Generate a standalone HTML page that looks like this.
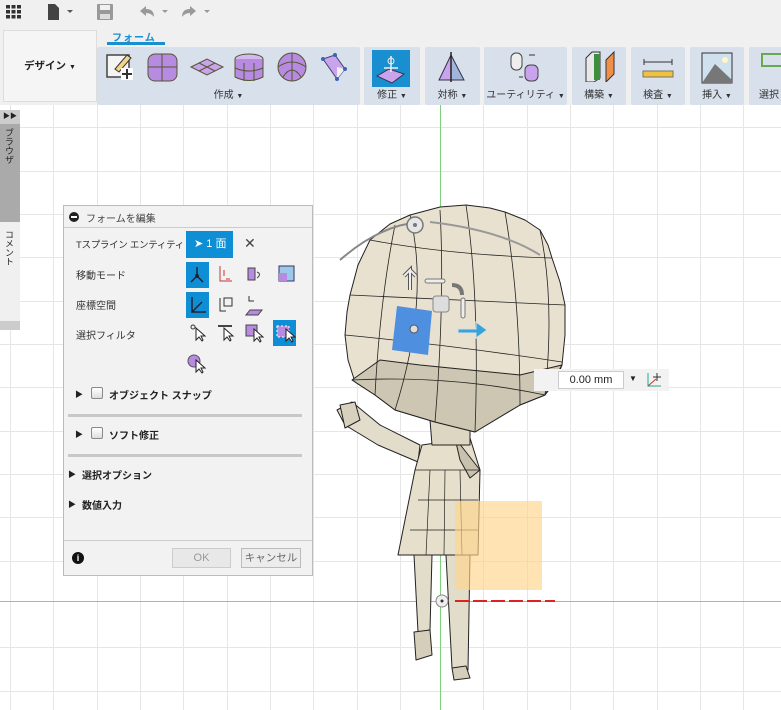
<!DOCTYPE html>
<html><head><meta charset="utf-8"><style>
*{box-sizing:border-box;margin:0;padding:0}
body{width:781px;height:710px;overflow:hidden;background:#fff;font-family:"Liberation Sans","Noto Sans CJK JP",sans-serif;font-size:11px;color:#222;position:relative}
.abs{position:absolute}
.panel{position:absolute;top:47px;height:58px;background:#d8e0ec;border-radius:2px}
.plabel{position:absolute;bottom:4px;left:0;right:0;text-align:center;font-size:10px;color:#333}
.lbl{position:absolute;left:12px;font-size:10px;color:#333;white-space:nowrap}
.bb{position:absolute;background:#0e8fd5;width:23px;height:26px}
</style></head><body>
<svg class="abs" style="left:0;top:0" width="781" height="710">
<g stroke="#e6e6e6" stroke-width="1">
<line x1="10.5" y1="105" x2="10.5" y2="710"/><line x1="53.5" y1="105" x2="53.5" y2="710"/><line x1="97.5" y1="105" x2="97.5" y2="710"/><line x1="140.5" y1="105" x2="140.5" y2="710"/><line x1="183.5" y1="105" x2="183.5" y2="710"/><line x1="227.5" y1="105" x2="227.5" y2="710"/><line x1="270.5" y1="105" x2="270.5" y2="710"/><line x1="313.5" y1="105" x2="313.5" y2="710"/><line x1="357.5" y1="105" x2="357.5" y2="710"/><line x1="400.5" y1="105" x2="400.5" y2="710"/><line x1="483.5" y1="105" x2="483.5" y2="710"/><line x1="527.5" y1="105" x2="527.5" y2="710"/><line x1="570.5" y1="105" x2="570.5" y2="710"/><line x1="613.5" y1="105" x2="613.5" y2="710"/><line x1="657.5" y1="105" x2="657.5" y2="710"/><line x1="700.5" y1="105" x2="700.5" y2="710"/><line x1="743.5" y1="105" x2="743.5" y2="710"/>
<line x1="0" y1="127.5" x2="781" y2="127.5"/><line x1="0" y1="171.5" x2="781" y2="171.5"/><line x1="0" y1="214.5" x2="781" y2="214.5"/><line x1="0" y1="257.5" x2="781" y2="257.5"/><line x1="0" y1="301.5" x2="781" y2="301.5"/><line x1="0" y1="344.5" x2="781" y2="344.5"/><line x1="0" y1="387.5" x2="781" y2="387.5"/><line x1="0" y1="431.5" x2="781" y2="431.5"/><line x1="0" y1="474.5" x2="781" y2="474.5"/><line x1="0" y1="517.5" x2="781" y2="517.5"/><line x1="0" y1="561.5" x2="781" y2="561.5"/><line x1="0" y1="647.5" x2="781" y2="647.5"/><line x1="0" y1="691.5" x2="781" y2="691.5"/>
</g>
<line x1="440.5" y1="105" x2="440.5" y2="710" stroke="#7ed07e"/>
<line x1="0" y1="601.5" x2="781" y2="601.5" stroke="#e49a9a"/>
<g stroke="#222" stroke-width="1" stroke-linejoin="round">
<polygon points="414,555 432,555 430,630 418,632" fill="#e2dccb"/>
<polygon points="446,555 470,555 468,670 452,668" fill="#e2dccb"/>
<polygon points="414,632 430,630 432,655 416,660" fill="#d4ceba"/>
<polygon points="452,668 466,666 470,678 454,680" fill="#d4ceba"/>
<polygon points="337,410 352,402 380,425 420,445 418,462 378,445 345,425" fill="#e2dccb"/>
<polygon points="340,405 355,402 360,420 345,428" fill="#d8d1bd"/>
<polygon points="422,445 470,438 480,470 478,555 398,555 415,470" fill="#e6dfcc"/>
<polygon points="455,438 480,470 470,478 460,460" fill="#c8c1ad"/>
<polygon points="430,420 470,425 470,445 432,445" fill="#ddd6c2"/>
<path d="M430,470 L426,555 M445,470 L444,555 M460,470 L462,555 M418,500 L478,500 M410,530 L478,530 M415,470 L480,470" fill="none" stroke-width=".7"/>
<polygon points="466,205 490,208 505,212 525,220 540,230 548,245 552,258 560,282 565,305 565,335 562,365 555,382 545,395 520,405 475,432 435,422 395,410 375,395 355,382 348,360 345,335 347,312 350,295 358,265 370,240 390,224 410,215 440,207" fill="#e8e1cf"/>
<polygon points="352,380 375,395 395,410 435,422 475,432 520,405 545,395 562,365 520,375 470,370 420,365 380,360" fill="#cdc6b2"/>
<path d="M345,335 Q450,345 562,362 M350,295 Q450,300 565,305 M370,240 Q450,255 552,258 M352,380 Q450,375 545,395 M410,215 Q430,300 395,410 M440,210 Q445,300 435,422 M466,205 Q480,300 475,432 M505,212 Q520,300 520,405 M395,225 Q380,300 375,395 M540,230 Q555,300 545,395" fill="none" stroke-width=".8"/>
</g>
<polygon points="397,306 432,311 428,355 392,350" fill="#4f8fe0"/>
<circle cx="414" cy="329" r="4" fill="#ddd" stroke="#555"/>
<path d="M340,260 Q380,225 420,222" stroke="#888" stroke-width="2" fill="none"/>
<path d="M430,222 Q500,230 540,255" stroke="#999" stroke-width="2" fill="none"/>
<circle cx="415" cy="225" r="8" fill="#e6e6e6" stroke="#777" stroke-width="1.5"/><circle cx="415" cy="225" r="2" fill="#777"/>
<path d="M410,290 L410,270 L404,276 M410,270 L416,276" stroke="#555" stroke-width="4" fill="none"/>
<path d="M410,290 L410,270 L404,276 M410,270 L416,276" stroke="#eee" stroke-width="2" fill="none"/>
<rect x="425" y="279" width="20" height="4" rx="2" fill="#eee" stroke="#777"/>
<path d="M452,285 Q462,285 462,295" stroke="#777" stroke-width="4" fill="none"/>
<rect x="433" y="296" width="16" height="16" rx="3" fill="#ddd" stroke="#888"/>
<rect x="461" y="298" width="4" height="20" rx="2" fill="#eee" stroke="#777"/>
<path d="M458,329 L476,329 L476,322 L487,330 L476,338 L476,333 L458,333Z" fill="#36a3d9" stroke="#ddd"/>
<rect x="455" y="501" width="87" height="89" fill="#ffd48a" opacity=".65"/>
<path d="M455,601 L555,601" stroke="#d22" stroke-width="2" stroke-dasharray="14,4"/>
<circle cx="442" cy="601" r="6" fill="#eee" stroke="#888"/><circle cx="442" cy="601" r="1.5" fill="#333"/>
</svg>
<div class="abs" style="left:534px;top:369px;width:135px;height:22px;background:#f2f2f2"></div>
<div class="abs" style="left:558px;top:371px;width:66px;height:18px;background:#fff;border:1px solid #ccc;font-size:11px;text-align:center;line-height:16px">0.00 mm</div>
<div class="abs" style="left:629px;top:374px;font-size:8px">▼</div>
<svg class="abs" style="left:645px;top:371px" width="18" height="18"><path d="M3,2 L3,15 L16,15" stroke="#2a8" fill="none"/><path d="M3,15 L11,8" stroke="#c33"/><path d="M12,2 V10 M8,6 H16" stroke="#333"/></svg>
<div class="abs" style="left:0;top:0;width:781px;height:105px;background:#f0f0f0"></div>
<svg class="abs" style="left:6px;top:5px" width="16" height="14"><g fill="#333"><rect x="0" y="0" width="4" height="3.5"/><rect x="5.5" y="0" width="4" height="3.5"/><rect x="11" y="0" width="4" height="3.5"/><rect x="0" y="5" width="4" height="3.5"/><rect x="5.5" y="5" width="4" height="3.5"/><rect x="11" y="5" width="4" height="3.5"/><rect x="0" y="10" width="4" height="3.5"/><rect x="5.5" y="10" width="4" height="3.5"/><rect x="11" y="10" width="4" height="3.5"/></g></svg>
<svg class="abs" style="left:47px;top:4px" width="28" height="16"><path d="M1,0 H8 L12,4 V16 H1Z" fill="#444"/><path d="M20,6 L26,6 L23,9Z" fill="#555"/></svg>
<svg class="abs" style="left:97px;top:4px" width="16" height="16"><rect x="0" y="0" width="16" height="16" rx="1" fill="#999"/><rect x="3" y="1" width="10" height="5" fill="#f0f0f0"/><rect x="3" y="10" width="10" height="5" fill="#ddd"/></svg>
<svg class="abs" style="left:138px;top:4px" width="80" height="16"><path d="M2,7 L8,2 V5 Q16,5 16,13 Q13,9 8,9 V12Z" fill="#999"/><path d="M24,6 L30,6 L27,9Z" fill="#999"/><path d="M58,7 L52,2 V5 Q44,5 44,13 Q47,9 52,9 V12Z" fill="#999"/><path d="M66,6 L72,6 L69,9Z" fill="#999"/></svg>
<div class="abs" style="left:3px;top:30px;width:94px;height:72px;background:#f5f5f5;border:1px solid #ddd;text-align:center;line-height:70px;font-weight:bold;font-size:10.5px">デザイン <span style="font-size:7px">▼</span></div>
<div class="abs" style="left:112px;top:29px;font-size:10px;color:#1a8fd0;font-weight:bold;letter-spacing:1px">フォーム</div>
<div class="abs" style="left:107px;top:42px;width:58px;height:3px;background:#1a8fd0"></div>
<div class="panel" style="left:97px;width:263px"><div class="plabel">作成 <span style="font-size:7px">▼</span></div>
<svg class="abs" style="left:8px;top:4px" width="250" height="32">
<rect x="2" y="4" width="22" height="22" fill="#f4f4f4" stroke="#444" stroke-width="1.5"/><path d="M10,18 L22,4 L26,7 L14,21Z" fill="#f2d58a" stroke="#333"/><rect x="16" y="17" width="12" height="12" fill="#fff"/><path d="M22,18 V28 M17,23 H27" stroke="#333" stroke-width="2"/>
<rect x="43" y="3" width="29" height="27" rx="7" fill="#b78be0" stroke="#553"/><path d="M57,3 V30 M43,16 H72" stroke="#553"/>
<path d="M86,16 L102,8 L118,16 L102,24Z" fill="#c9a4ec" stroke="#553"/><path d="M94,12 L110,20 M94,20 L110,12" stroke="#553"/>
<ellipse cx="144" cy="8" rx="14" ry="5" fill="#d6b8f0" stroke="#553"/><path d="M130,8 V26 Q144,33 158,26 V8" fill="#b78be0" stroke="#553"/><path d="M130,17 Q144,23 158,17 M139,12 V30 M149,12 V30" stroke="#553" fill="none"/>
<circle cx="187" cy="16" r="14" fill="#b78be0" stroke="#553"/><path d="M173,16 Q187,6 201,16 M187,2 V30 M178,26 Q187,12 196,26" stroke="#553" fill="none"/>
<path d="M218,8 L230,4 L240,18 L232,28Z" fill="#c9a4ec" stroke="#447"/><path d="M232,16 L240,18 L232,28Z" fill="#eee"/><circle cx="218" cy="8" r="2" fill="#3a64b8"/><circle cx="230" cy="4" r="2" fill="#3a64b8"/><circle cx="240" cy="18" r="2" fill="#3a64b8"/><circle cx="232" cy="28" r="2" fill="#3a64b8"/>
</svg></div>
<div class="panel" style="left:364px;width:56px"><div class="plabel">修正 <span style="font-size:7px">▼</span></div><div class="abs" style="left:8px;top:3px;width:38px;height:37px;background:#1a8fd0"></div><svg class="abs" style="left:10px;top:5px" width="34" height="33"><path d="M3,24 L15,17 L30,22 L18,31Z" fill="#c9a4ec" stroke="#335"/><path d="M17,4 V20 M10,16 L24,16" stroke="#eee" stroke-width="1.5"/><circle cx="17" cy="9" r="3" fill="none" stroke="#eee"/></svg></div>
<div class="panel" style="left:425px;width:55px"><div class="plabel">対称 <span style="font-size:7px">▼</span></div><svg class="abs" style="left:12px;top:5px" width="30" height="30"><path d="M14,3 L2,28 H14Z" fill="#c9a4ec" stroke="#334"/><path d="M14,3 L27,28 H14Z" fill="#9fb5d9" stroke="#334"/><path d="M14,0 V30" stroke="#222" stroke-width="1.5"/></svg></div>
<div class="panel" style="left:484px;width:83px"><div class="plabel">ユーティリティ <span style="font-size:7px">▼</span></div><svg class="abs" style="left:25px;top:4px" width="36" height="32"><rect x="2" y="2" width="11" height="17" rx="5" fill="#eee" stroke="#444"/><rect x="16" y="14" width="13" height="16" rx="5" fill="#c9a4ec" stroke="#444"/><path d="M20,4 h6 M14,26 h-4" stroke="#333"/></svg></div>
<div class="panel" style="left:572px;width:54px"><div class="plabel">構築 <span style="font-size:7px">▼</span></div><svg class="abs" style="left:12px;top:3px" width="32" height="32"><path d="M2,8 L8,2 H16 V28 L10,32 H2Z" fill="#e8e8e8" stroke="#333"/><rect x="10" y="4" width="6" height="26" fill="#3d8f3d"/><path d="M22,10 L30,2 V24 L22,32Z" fill="#f09048" stroke="#333"/></svg></div>
<div class="panel" style="left:631px;width:54px"><div class="plabel">検査 <span style="font-size:7px">▼</span></div><svg class="abs" style="left:11px;top:10px" width="32" height="24"><path d="M2,2 V8 M30,2 V8 M2,5 H30" stroke="#333"/><rect x="1" y="14" width="30" height="6" fill="#f0c040" stroke="#776"/></svg></div>
<div class="panel" style="left:690px;width:54px"><div class="plabel">挿入 <span style="font-size:7px">▼</span></div><svg class="abs" style="left:11px;top:5px" width="32" height="32"><rect x="1" y="1" width="30" height="30" fill="#cfe0ee" stroke="#333"/><path d="M1,31 L14,12 L31,28 V31Z" fill="#777"/><circle cx="24" cy="8" r="3" fill="#fff8c0"/></svg></div>
<div class="panel" style="left:749px;width:40px"><div class="plabel" style="text-align:left;left:10px">選択</div><div class="abs" style="left:12px;top:6px;width:30px;height:14px;border:2px solid #6aa84f"></div></div>
<div class="abs" style="left:0;top:110px;width:20px;height:220px;background:#f0f0f0"></div>
<div class="abs" style="left:0;top:110px;width:20px;height:14px;background:#ccc;font-size:7px;line-height:14px;text-align:center">▶▶</div>
<div class="abs" style="left:0;top:124px;width:20px;height:98px;background:#aaa"></div>
<div class="abs" style="left:3px;top:128px;font-size:9px;writing-mode:vertical-rl;color:#222">ブラウザ</div>
<div class="abs" style="left:3px;top:230px;font-size:9px;writing-mode:vertical-rl;color:#222">コメント</div>
<div class="abs" style="left:0;top:321px;width:20px;height:9px;background:#ccc"></div>
<div class="abs" style="left:63px;top:205px;width:250px;height:371px;background:#f2f2f2;border:1px solid #bbb">
<div style="height:22px;border-bottom:1px solid #ccc;position:relative"><div class="abs" style="left:5px;top:6px;width:10px;height:10px;border-radius:5px;background:#222"></div><div class="abs" style="left:7px;top:10px;width:6px;height:2px;background:#fff"></div><div class="abs" style="left:22px;top:4px;font-size:10px;color:#444">フォームを編集</div></div>
<div class="lbl" style="top:31px;font-size:9.5px;letter-spacing:-0.3px">Tスプライン エンティティ</div>
<div class="abs" style="left:122px;top:25px;width:47px;height:27px;background:#0e8fd5;color:#fff;font-size:11px;line-height:27px;padding-left:8px">➤ 1 面</div>
<div class="abs" style="left:180px;top:29px;font-size:14px;color:#444">✕</div>
<div class="lbl" style="top:61px">移動モード</div>
<div class="bb" style="left:122px;top:56px"></div>
<svg class="abs" style="left:122px;top:56px" width="112" height="85">
<path d="M11,5 V14 L5,20 M11,14 L17,20" stroke="#223" stroke-width="1.5" fill="none"/><circle cx="11" cy="14" r="2" fill="#223"/>
<path d="M34,4 V19 H46 M38,8 V14 M40,17 H44" stroke="#c33" fill="none"/>
<rect x="62" y="6" width="7" height="12" fill="#b78be0" stroke="#444"/><path d="M71,10 Q76,12 71,16" stroke="#444" fill="none"/>
<rect x="93" y="4" width="15" height="15" fill="#9cc8ea" stroke="#336"/><rect x="93" y="11" width="8" height="8" fill="#b78be0"/>
<rect x="0" y="30" width="23" height="26" fill="#0e8fd5"/><path d="M6,35 V50 H20 M6,50 L16,40" stroke="#223" stroke-width="1.5" fill="none"/>
<path d="M34,36 V49 H40 M38,36 H46 V44 H38Z" stroke="#333" fill="none"/>
<path d="M63,34 V39 H68" stroke="#333" fill="none"/><path d="M64,48 L76,48 L72,53 L60,53Z" fill="#b78be0" stroke="#444"/>
</svg>
<div class="lbl" style="top:91px">座標空間</div>
<div class="lbl" style="top:121px">選択フィルタ</div>
<svg class="abs" style="left:122px;top:114px" width="112" height="55">
<circle cx="7" cy="7" r="2" fill="none" stroke="#333"/><path d="M10,8 L10,20 L13,17 L16,21 L17,20 L15,16 L19,16Z" fill="#fff" stroke="#222"/>
<path d="M32,6 H46" stroke="#444" stroke-width="2"/><path d="M38,8 L38,20 L41,17 L44,21 L45,20 L43,16 L47,16Z" fill="#fff" stroke="#222"/>
<rect x="60" y="5" width="11" height="11" fill="#b78be0" stroke="#444"/><path d="M68,9 L68,21 L71,18 L74,22 L75,21 L73,17 L77,17Z" fill="#fff" stroke="#222"/>
<rect x="87" y="0" width="23" height="26" fill="#0e8fd5"/><rect x="91" y="6" width="12" height="11" fill="#b78be0" stroke="#fff" stroke-dasharray="2,2"/><path d="M100,9 L100,21 L103,18 L106,22 L107,21 L105,17 L109,17Z" fill="#fff" stroke="#222"/>
<ellipse cx="8" cy="41" rx="6" ry="6" fill="#b78be0" stroke="#555"/><path d="M10,40 L10,52 L13,49 L16,53 L17,52 L15,48 L19,48Z" fill="#fff" stroke="#222"/>
</svg>
<div class="abs" style="left:11px;top:183px;font-size:8px">▶</div><div class="abs" style="left:27px;top:181px;width:12px;height:12px;border:1px solid #888;border-radius:2px;background:linear-gradient(#fff,#ddd)"></div><div class="abs" style="left:45px;top:181px;font-size:10px;font-weight:bold">オブジェクト スナップ</div>
<div class="abs" style="left:4px;top:208px;width:234px;height:3px;background:#c8c8c8"></div>
<div class="abs" style="left:11px;top:223px;font-size:8px">▶</div><div class="abs" style="left:27px;top:221px;width:12px;height:12px;border:1px solid #888;border-radius:2px;background:linear-gradient(#fff,#ddd)"></div><div class="abs" style="left:45px;top:221px;font-size:10px;font-weight:bold">ソフト修正</div>
<div class="abs" style="left:4px;top:248px;width:234px;height:3px;background:#c8c8c8"></div>
<div class="abs" style="left:4px;top:263px;font-size:8px">▶</div><div class="abs" style="left:18px;top:261px;font-size:10px;font-weight:bold">選択オプション</div>
<div class="abs" style="left:4px;top:293px;font-size:8px">▶</div><div class="abs" style="left:18px;top:291px;font-size:10px;font-weight:bold">数値入力</div>
<div class="abs" style="left:0;top:334px;width:248px;height:1px;background:#ccc"></div>
<div class="abs" style="left:8px;top:346px;width:12px;height:12px;border-radius:6px;background:#111;color:#fff;font-size:9px;font-weight:bold;text-align:center;line-height:12px">i</div>
<div class="abs" style="left:108px;top:342px;width:59px;height:20px;border:1px solid #ccc;background:#e8e8e8;color:#999;text-align:center;line-height:18px;font-size:11px">OK</div>
<div class="abs" style="left:177px;top:342px;width:60px;height:20px;border:1px solid #bbb;background:#ececec;color:#666;text-align:center;line-height:18px;font-size:10.5px">キャンセル</div>
</div>
</body></html>
